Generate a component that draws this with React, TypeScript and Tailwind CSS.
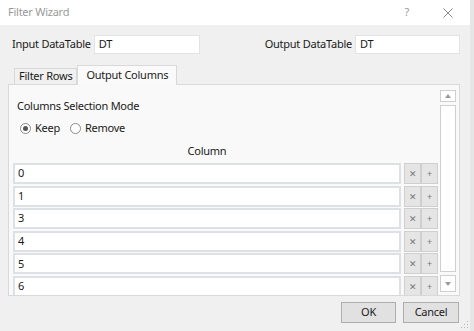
import React, { useState } from "react";

const FONT = { fontFamily: '"Segoe UI", "Noto Sans", "Open Sans", sans-serif', letterSpacing: "-0.25px" };

const rows = ["0", "1", "3", "4", "5", "6"];

function RowButton({ label }: { label: string }) {
  return (
    <button className="w-[17px] h-[21px] flex items-center justify-center bg-[#e5e5e5] border border-[#cfcfcf] text-[9px] leading-none text-[#777]">
      {label}
    </button>
  );
}

export default function App() {
  const [mode, setMode] = useState("keep");

  return (
    <div style={FONT} className="w-[474px] h-[331px] overflow-hidden bg-[#f0f0f0] text-[11px] text-[#1a1a1a] flex flex-col border-r-[4px] border-[#e6e6e6] relative">
      {/* Title bar */}
      <div className="h-[25px] bg-white flex items-center pl-[8px] pr-[17px] shrink-0">
        <span className="text-[#9a9a9a]">Filter Wizard</span>
        <span className="ml-auto text-[#9a9a9a] mr-[34px]">?</span>
        <svg width="10" height="10" viewBox="0 0 10 10" className="stroke-[#8a8a8a]">
          <path d="M0.5 0.5 L9.5 9.5 M9.5 0.5 L0.5 9.5" strokeWidth="1" />
        </svg>
      </div>

      {/* DataTable inputs */}
      <div className="flex items-center justify-between pl-[12px] pr-[10px] pt-[10px] h-[29px] shrink-0">
        <div className="flex items-center gap-[3px]">
          <span>Input DataTable</span>
          <div className="w-[106px] h-[19px] bg-white border border-[#e3e3e3] flex items-center px-[4px]">DT</div>
        </div>
        <div className="flex items-center gap-[3px]">
          <span>Output DataTable</span>
          <div className="w-[105px] h-[19px] bg-white border border-[#e3e3e3] flex items-center px-[4px]">DT</div>
        </div>
      </div>

      {/* Tabs */}
      <div className="flex items-end pl-[14px] mt-[10px] h-[20px] shrink-0">
        <div className="h-[16px] px-[4px] border border-b-0 border-[#d9d9d9] bg-[#f0f0f0] flex items-center">Filter Rows</div>
        <div className="h-[20px] px-[8px] border border-b-0 border-[#d9d9d9] bg-[#fafafa] flex items-center -mb-px relative z-10">Output Columns</div>
      </div>

      {/* Tab panel */}
      <div className="ml-[8px] w-[452px] h-[212px] border border-[#d9d9d9] bg-[#f9f9f9] flex shrink-0">
        <div className="flex-1 pl-[4px] pr-[1px] overflow-hidden">
          <div className="pl-[4px] pt-[13px] h-[33px]">Columns Selection Mode</div>
          <div className="flex items-center pl-[7px] h-[21px] gap-[10px]">
            <label className="flex items-center gap-[4px]" onClick={() => setMode("keep")}>
              <span className="w-[11px] h-[11px] rounded-full border border-[#8a8a8a] bg-white flex items-center justify-center">
                {mode === "keep" && <span className="w-[5px] h-[5px] rounded-full bg-[#555]" />}
              </span>
              Keep
            </label>
            <label className="flex items-center gap-[4px]" onClick={() => setMode("remove")}>
              <span className="w-[11px] h-[11px] rounded-full border border-[#8a8a8a] bg-white flex items-center justify-center">
                {mode === "remove" && <span className="w-[5px] h-[5px] rounded-full bg-[#555]" />}
              </span>
              Remove
            </label>
          </div>
          <div className="flex h-[24px] items-center">
            <div className="w-[388px] text-center">Column</div>
          </div>
          <div className="flex flex-col gap-[1.6px]">
            {rows.map((r) => (
              <div key={r} className="flex items-center gap-[3px]">
                <div className="w-[388px] h-[21px] bg-white border-2 border-[#dde1e6] flex items-center px-[3px]">{r}</div>
                <div className="flex">
                  <RowButton label="✕" />
                  <RowButton label="+" />
                </div>
              </div>
            ))}
          </div>
        </div>

        {/* Scrollbar */}
        <div className="w-[16px] mr-[3px] pt-[5px] pb-[3px] flex flex-col gap-[3px]">
          <div className="h-[12px] bg-white border border-[#cfcfcf] flex items-center justify-center">
            <svg width="6" height="4" viewBox="0 0 6 4"><path d="M0 4 L3 0 L6 4 Z" fill="#9a9a9a" /></svg>
          </div>
          <div className="flex-1 bg-white border border-[#cfcfcf]" />
          <div className="h-[17px] bg-white border border-[#cfcfcf] flex items-center justify-center">
            <svg width="6" height="4" viewBox="0 0 6 4"><path d="M0 0 L3 4 L6 0 Z" fill="#9a9a9a" /></svg>
          </div>
        </div>
      </div>

      {/* Footer */}
      <div className="flex justify-end gap-[7px] pr-[11px] pt-[6px]">
        <button className="w-[55px] h-[21px] bg-[#e1e1e1] border border-[#adadad]">OK</button>
        <button className="w-[56px] h-[21px] bg-[#e1e1e1] border border-[#adadad]">Cancel</button>
      </div>

      {/* Resize grip */}
      <svg className="absolute right-[1px] bottom-[2px]" width="9" height="9" viewBox="0 0 9 9">
        <g fill="#b5b5b5">
          <rect x="7" y="1" width="1" height="1" />
          <rect x="4" y="4" width="1" height="1" />
          <rect x="7" y="4" width="1" height="1" />
          <rect x="1" y="7" width="1" height="1" />
          <rect x="4" y="7" width="1" height="1" />
          <rect x="7" y="7" width="1" height="1" />
        </g>
      </svg>
    </div>
  );
}
